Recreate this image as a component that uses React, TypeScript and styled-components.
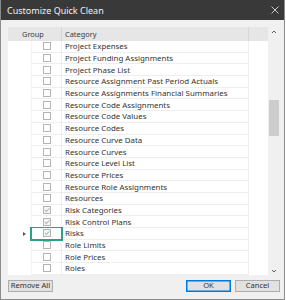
import React from "react";
import styled, { createGlobalStyle } from "styled-components";

const Global = createGlobalStyle`
  html, body { margin: 0; padding: 0; background: #ffffff; }
  body { font-family: "Noto Sans", "Open Sans", sans-serif; }
  * { box-sizing: border-box; }
`;

const Window = styled.div`
  width: 285px;
  height: 300px;
  border: 1px solid #8c8c8c;
  border-top: none;
  display: flex;
  flex-direction: column;
  background: #f0f0f0;
`;

const TitleBar = styled.div`
  height: 20px;
  background: #393939;
  color: #f2f2f2;
  display: flex;
  align-items: center;
  justify-content: space-between;
  padding: 0 5px 0 6px;
  font-size: 9px;
  flex: none;
`;

const Close = styled.svg`
  width: 8px;
  height: 8px;
`;

const Body = styled.div`
  flex: 1;
  display: flex;
  flex-direction: column;
  padding: 7px 4px 0 7px;
`;

const Panel = styled.div`
  height: 248px;
  background: #ffffff;
  display: flex;
  overflow: hidden;
`;

const GridArea = styled.div`
  flex: 1;
  display: flex;
  flex-direction: column;
  overflow: hidden;
`;

const cols = "23px 31px 187px 1fr";

const Header = styled.div`
  height: 14px;
  flex: none;
  background: #e6e6e6;
  display: grid;
  grid-template-columns: ${cols};
  font-size: 7.4px;
  color: #3a3a3a;
`;

const HeadCell = styled.div<{ $span?: number; $pad?: number; $line?: boolean }>`
  grid-column: span ${(p) => p.$span ?? 1};
  display: flex;
  align-items: center;
  padding-left: ${(p) => p.$pad ?? 0}px;
  border-right: ${(p) => (p.$line ? "1px solid #d6d6d6" : "none")};
`;

const Row = styled.div`
  height: 11.7px;
  flex: none;
  display: grid;
  grid-template-columns: ${cols};
  font-size: 7.9px;
  color: #333333;
`;

const Indicator = styled.div`
  display: flex;
  align-items: center;
  justify-content: flex-end;
  padding-right: 5px;
`;

const Tri = styled.div`
  width: 0;
  height: 0;
  border-top: 2.5px solid transparent;
  border-bottom: 2.5px solid transparent;
  border-left: 3px solid #555;
`;

const GroupCell = styled.div<{ $focus?: boolean }>`
  display: flex;
  align-items: center;
  justify-content: center;
  border-bottom: 1px solid #eeeeee;
  border-left: 1px solid #f3f3f3;
  border-right: 1px solid #eeeeee;
  outline: ${(p) => (p.$focus ? "1px solid #2f9e86" : "none")};
  outline-offset: 0px;
  position: relative;
  ${(p) => (p.$focus ? "z-index: 1; border-color: #2f9e86;" : "")}
`;

const CatCell = styled.div`
  display: flex;
  align-items: center;
  padding-left: 3px;
  white-space: nowrap;
  overflow: hidden;
  border-bottom: 1px solid #eeeeee;
  border-right: 1px solid #eeeeee;
`;

const Box = styled.div<{ $checked?: boolean }>`
  width: 8px;
  height: 8px;
  border: 1px solid #b4b4b4;
  background: ${(p) => (p.$checked ? "#f4f4f4" : "#ffffff")};
  display: flex;
  align-items: center;
  justify-content: center;
`;

const Scrollbar = styled.div`
  width: 12px;
  flex: none;
  background: #f0f0f0;
  display: flex;
  flex-direction: column;
  align-items: center;
  justify-content: space-between;
  padding: 3px 0 2px;
`;

const Track = styled.div`
  flex: 1;
  width: 100%;
  padding: 66px 1px 0;
`;

const Thumb = styled.div`
  width: 10px;
  height: 36px;
  background: #cdcdcd;
`;

const Footer = styled.div`
  display: flex;
  align-items: center;
  justify-content: space-between;
  padding-top: 5px;
`;

const Button = styled.button<{ $primary?: boolean }>`
  width: 45px;
  height: 12px;
  padding: 0;
  font-family: "Noto Sans", "Open Sans", sans-serif;
  font-size: 7.6px;
  color: #333;
  background: #e1e1e1;
  border: 1px solid ${(p) => (p.$primary ? "#0078d7" : "#adadad")};
  box-shadow: ${(p) => (p.$primary ? "inset 0 0 0 0.5px #0078d7" : "none")};
  display: flex;
  align-items: center;
  justify-content: center;
  line-height: 1;
`;

const RightButtons = styled.div`
  display: flex;
  gap: 4px;
`;

const rows: { name: string; checked?: boolean; current?: boolean }[] = [
  { name: "Project Expenses" },
  { name: "Project Funding Assignments" },
  { name: "Project Phase List" },
  { name: "Resource Assignment Past Period Actuals" },
  { name: "Resource Assignments Financial Summaries" },
  { name: "Resource Code Assignments" },
  { name: "Resource Code Values" },
  { name: "Resource Codes" },
  { name: "Resource Curve Data" },
  { name: "Resource Curves" },
  { name: "Resource Level List" },
  { name: "Resource Prices" },
  { name: "Resource Role Assignments" },
  { name: "Resources" },
  { name: "Risk Categories", checked: true },
  { name: "Risk Control Plans", checked: true },
  { name: "Risks", checked: true, current: true },
  { name: "Role Limits" },
  { name: "Role Prices" },
  { name: "Roles" },
];

const Check = () => (
  <svg width="6" height="6" viewBox="0 0 6 6">
    <path d="M0.8 3.1 L2.4 4.6 L5.2 1.4" fill="none" stroke="#8a8a8a" strokeWidth="0.8" />
  </svg>
);

const Chevron = ({ up }: { up?: boolean }) => (
  <svg width="6" height="4" viewBox="0 0 6 4">
    <path d={up ? "M1 3 L3 1 L5 3" : "M1 1 L3 3 L5 1"} fill="none" stroke="#606060" strokeWidth="1" />
  </svg>
);

export default function App() {
  return (
    <>
      <Global />
      <Window>
        <TitleBar>
          <span>Customize Quick Clean</span>
          <Close viewBox="0 0 8 8">
            <path d="M0.5 0.5 L7.5 7.5 M7.5 0.5 L0.5 7.5" stroke="#d8d8d8" strokeWidth="0.9" />
          </Close>
        </TitleBar>
        <Body>
          <Panel>
            <GridArea>
              <Header>
                <HeadCell $span={2} $pad={14} $line>
                  Group
                </HeadCell>
                <HeadCell $pad={3} $line>
                  Category
                </HeadCell>
                <HeadCell />
              </Header>
              {rows.map((r) => (
                <Row key={r.name}>
                  <Indicator>{r.current && <Tri />}</Indicator>
                  <GroupCell $focus={r.current}>
                    <Box $checked={r.checked}>{r.checked && <Check />}</Box>
                  </GroupCell>
                  <CatCell>{r.name}</CatCell>
                  <div />
                </Row>
              ))}
            </GridArea>
            <Scrollbar>
              <Chevron up />
              <Track>
                <Thumb />
              </Track>
              <Chevron />
            </Scrollbar>
          </Panel>
          <Footer>
            <Button>Remove All</Button>
            <RightButtons>
              <Button $primary>OK</Button>
              <Button>Cancel</Button>
            </RightButtons>
          </Footer>
        </Body>
      </Window>
    </>
  );
}
